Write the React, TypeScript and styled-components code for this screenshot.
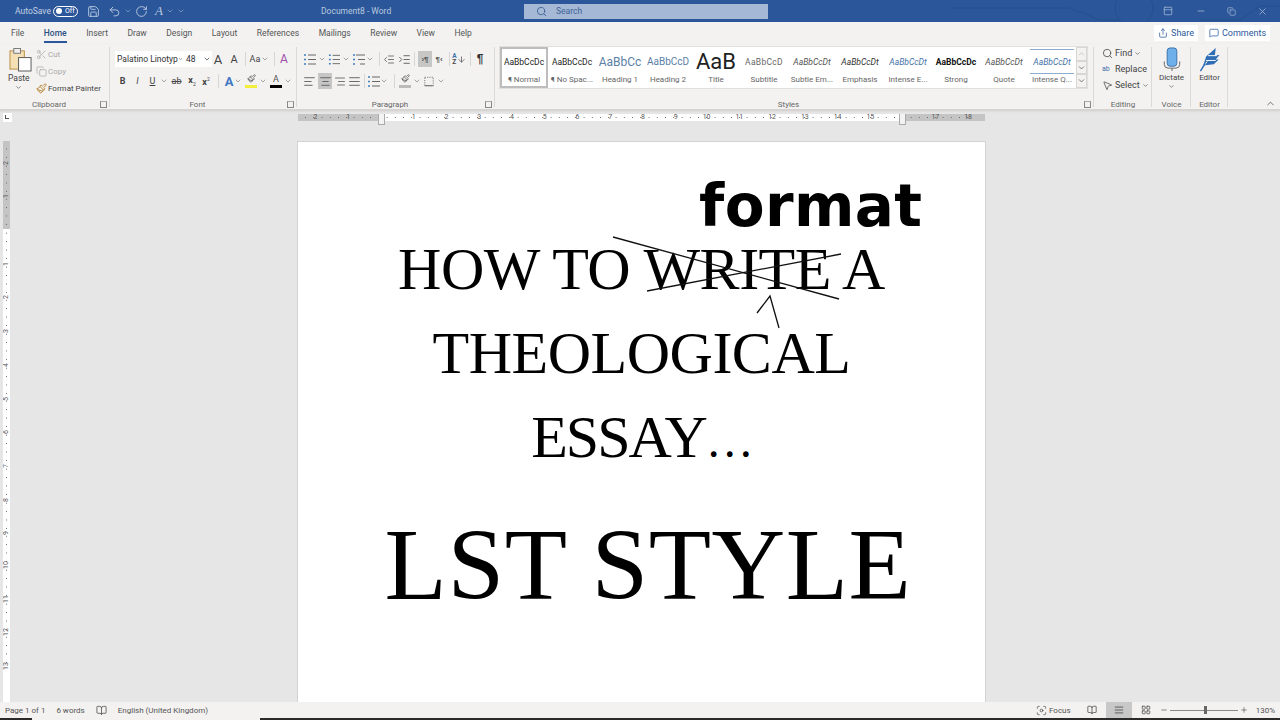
import React from "react"
import styled, { createGlobalStyle } from "styled-components"
import {
  AlignCenter,
  AlignJustify,
  AlignLeft,
  AlignRight,
  ArrowDown,
  BookOpen,
  ChevronDown,
  ChevronUp,
  Copy,
  Focus,
  Indent,
  LayoutGrid,
  Minus,
  MessageSquare,
  MousePointer2,
  Outdent,
  PanelTop,
  Paintbrush,
  Plus,
  RotateCw,
  Save,
  Scissors,
  Search,
  Share,
  Undo2,
  X,
} from "lucide-react"

const GlobalStyle = createGlobalStyle`
  html, body {
    margin: 0;
    height: 100%;
    overflow: hidden;
    font-family: Roboto, "Liberation Sans", sans-serif;
    color: #444;
  }
`

const TABS = ["File", "Home", "Insert", "Draw", "Design", "Layout", "References", "Mailings", "Review", "View", "Help"]

const STYLES = [
  { preview: "AaBbCcDc", label: "¶ Normal", size: 8.5, color: "#222", active: true },
  { preview: "AaBbCcDc", label: "¶ No Spac...", size: 8.5, color: "#222" },
  { preview: "AaBbCc", label: "Heading 1", size: 12, color: "#5b7fa6" },
  { preview: "AaBbCcD", label: "Heading 2", size: 10, color: "#5b7fa6" },
  { preview: "AaB", label: "Title", size: 22, color: "#222" },
  { preview: "AaBbCcD", label: "Subtitle", size: 8.5, color: "#666", spaced: true },
  { preview: "AaBbCcDt", label: "Subtle Em...", size: 8.5, color: "#555", italic: true },
  { preview: "AaBbCcDt", label: "Emphasis", size: 8.5, color: "#333", italic: true },
  { preview: "AaBbCcDt", label: "Intense E...", size: 8.5, color: "#4472a8", italic: true },
  { preview: "AaBbCcDc", label: "Strong", size: 8.5, color: "#111", bold: true },
  { preview: "AaBbCcDt", label: "Quote", size: 8.5, color: "#555", italic: true },
  { preview: "AaBbCcDt", label: "Intense Q...", size: 8.5, color: "#4472a8", italic: true, ruled: true },
]

const App = () => {
  return (
    <>
      <GlobalStyle />
      <Shell>
        <TitleBar>
          <Circuit viewBox="0 0 340 22" fill="none">
            <path d="M10 8H130L160 20H180M260 20H300L320 6H340" stroke="#24508f" />
            <circle cx="194" cy="8" r="19" stroke="#24508f" />
          </Circuit>
          <AutoSave>AutoSave</AutoSave>
          <Toggle>
            <ToggleDot />
            Off
          </Toggle>
          <TitleIcons>
            <Save size={13} strokeWidth={1.7} />
            <Undo2 size={13} strokeWidth={1.7} />
            <TinyChevron size={8} />
            <RotateCw size={13} strokeWidth={1.7} />
            <TitleGlyph>A</TitleGlyph>
            <TinyChevron size={8} />
            <TinyChevron size={8} />
          </TitleIcons>
          <DocTitle>Document8 - Word</DocTitle>
          <SearchBox>
            <Search size={11} strokeWidth={2} />
            Search
          </SearchBox>
          <WindowButtons>
            <PanelTop size={10} strokeWidth={1.8} />
            <Minus size={10} strokeWidth={1.8} />
            <Copy size={9} strokeWidth={1.8} />
            <X size={11} strokeWidth={1.6} />
          </WindowButtons>
        </TitleBar>

        <TabRow>
          {TABS.map((tab) => (
            <Tab key={tab} $active={tab === "Home"}>
              {tab}
            </Tab>
          ))}
          <TabActions>
            <ActionButton>
              <Share size={10} strokeWidth={1.8} />
              Share
            </ActionButton>
            <ActionButton $wide>
              <MessageSquare size={10} strokeWidth={1.8} />
              Comments
            </ActionButton>
          </TabActions>
        </TabRow>

        <Ribbon>
          <Group $width={110} label="Clipboard" launcher>
            <ClipboardBody>
              <PasteColumn>
                <PasteIcon viewBox="0 0 24 26" fill="none">
                  <rect x="1" y="4" width="15" height="19" fill="#f5dfb5" stroke="#b98d45" />
                  <rect x="5" y="1.5" width="7" height="5" fill="#eee" stroke="#777" />
                  <rect x="10" y="11" width="13" height="14" fill="#fff" stroke="#555" />
                </PasteIcon>
                <span>Paste</span>
                <ChevronDown size={7} />
              </PasteColumn>
              <ClipboardList>
                <ClipItem $muted>
                  <Scissors strokeWidth={1.6} />
                  Cut
                </ClipItem>
                <ClipItem $muted>
                  <Copy strokeWidth={1.6} />
                  Copy
                </ClipItem>
                <ClipItem>
                  <Paintbrush strokeWidth={2} color="#b5812f" />
                  Format Painter
                </ClipItem>
              </ClipboardList>
            </ClipboardBody>
          </Group>

          <Group $width={187} label="Font" launcher>
            <ToolRows>
              <ToolRow>
                <FieldBox $width={69}>
                  Palatino Linotyp
                  <ChevronDown size={8} />
                </FieldBox>
                <FieldBox $width={28}>
                  48
                  <ChevronDown size={8} />
                </FieldBox>
                <Slot $w={12}><FontGlyph $size={13}>A</FontGlyph></Slot>
                <Slot $w={20}><FontGlyph $size={11}>A</FontGlyph></Slot>
                <Slot $w={3}><RowDivider /></Slot>
                <Slot $w={16}><FontGlyph $size={9}>Aa</FontGlyph></Slot>
                <Slot $w={4}><TinyChevron size={8} /></Slot>
                <Slot $w={14}><RowDivider /></Slot>
                <Slot $w={6}><FontGlyph $size={12} $color="#a04fa8">A</FontGlyph></Slot>
              </ToolRow>
              <ToolRow>
                <Slot $w={15}><FontGlyph $size={9} $bold>B</FontGlyph></Slot>
                <Slot $w={15}><FontGlyph $size={9} $italic>I</FontGlyph></Slot>
                <Slot $w={15}><FontGlyph $size={9} $underline>U</FontGlyph></Slot>
                <Slot $w={8}><TinyChevron size={8} /></Slot>
                <Slot $w={17}><FontGlyph $size={9} $strike>ab</FontGlyph></Slot>
                <Slot $w={14}><FontGlyph $size={9} $bold>x<Script>2</Script></FontGlyph></Slot>
                <Slot $w={14}><FontGlyph $size={9} $bold>x<Script $up>2</Script></FontGlyph></Slot>
                <Slot $w={10}><RowDivider /></Slot>
                <Slot $w={12}><FontGlyph $size={13} $bold $color="#3f78c4">A</FontGlyph></Slot>
                <Slot $w={6}><TinyChevron size={8} /></Slot>
                <Slot $w={20}>
                  <ColorTool $bar="#f2ee3a">
                    <Paintbrush size={9} strokeWidth={2} />
                  </ColorTool>
                </Slot>
                <Slot $w={4}><TinyChevron size={8} /></Slot>
                <Slot $w={22}><ColorTool $bar="#000">A</ColorTool></Slot>
                <Slot $w={1}><TinyChevron size={8} /></Slot>
              </ToolRow>
            </ToolRows>
          </Group>

          <Group $width={198} label="Paragraph" launcher>
            <ToolRows>
              <ToolRow $inset={6}>
                <Slot $w={13}><ListGlyph /></Slot>
                <Slot $w={12}><TinyChevron size={8} /></Slot>
                <Slot $w={12}><ListGlyph /></Slot>
                <Slot $w={12}><TinyChevron size={8} /></Slot>
                <Slot $w={13}><ListGlyph stepped /></Slot>
                <Slot $w={10}><TinyChevron size={8} /></Slot>
                <Slot $w={8}><RowDivider /></Slot>
                <Slot $w={12}><Outdent size={13} strokeWidth={1.8} color="#666" /></Slot>
                <Slot $w={18}><Indent size={13} strokeWidth={1.8} color="#666" /></Slot>
                <Slot $w={3}><RowDivider /></Slot>
                <Slot $w={18}><ToggleTool $on><MarkText>›¶</MarkText></ToggleTool></Slot>
                <Slot $w={10}><MarkText>¶‹</MarkText></Slot>
                <Slot $w={10}><RowDivider /></Slot>
                <Slot $w={10}>
                  <SortTool>
                    <SortLetters>
                      <span>A</span>
                      <span>Z</span>
                    </SortLetters>
                    <ArrowDown size={9} strokeWidth={2} />
                  </SortTool>
                </Slot>
                <Slot $w={12}><RowDivider /></Slot>
                <Slot $w={8}><ShowMarks>¶</ShowMarks></Slot>
              </ToolRow>
              <ToolRow $inset={6}>
                <Slot $w={13}><AlignLeft size={13} strokeWidth={1.8} color="#666" /></Slot>
                <Slot $w={18}><ToggleTool $on><AlignCenter size={13} strokeWidth={1.8} color="#666" /></ToggleTool></Slot>
                <Slot $w={12}><AlignRight size={13} strokeWidth={1.8} color="#666" /></Slot>
                <Slot $w={16}><AlignJustify size={13} strokeWidth={1.8} color="#666" /></Slot>
                <Slot $w={4}><RowDivider /></Slot>
                <Slot $w={14}><ListGlyph /></Slot>
                <Slot $w={8}><TinyChevron size={8} /></Slot>
                <Slot $w={12}><RowDivider /></Slot>
                <Slot $w={10}>
                  <ColorTool $bar="#bbb">
                    <Paintbrush size={9} strokeWidth={2} />
                  </ColorTool>
                </Slot>
                <Slot $w={14}><TinyChevron size={8} /></Slot>
                <Slot $w={10}><BorderIcon /></Slot>
                <Slot $w={14}><TinyChevron size={8} /></Slot>
              </ToolRow>
            </ToolRows>
          </Group>

          <Group $width={599} label="Styles" launcher>
            <Gallery>
              {STYLES.map((s) => (
                <StyleCell key={s.label} $active={s.active}>
                  <StylePreview
                    $size={s.size}
                    $color={s.color}
                    $bold={s.bold}
                    $italic={s.italic}
                    $spaced={s.spaced}
                    $ruled={s.ruled}
                  >
                    {s.preview}
                  </StylePreview>
                  <StyleLabel>{s.label}</StyleLabel>
                </StyleCell>
              ))}
              <GalleryScroll>
                <ChevronUp size={8} color="#bbb" />
                <ChevronDown size={8} />
                <ChevronDown size={8} />
              </GalleryScroll>
            </Gallery>
          </Group>

          <Group $width={58} label="Editing">
            <EditingList>
              <EditItem>
                <Search strokeWidth={1.7} />
                Find
                <ChevronDown size={7} />
              </EditItem>
              <EditItem>
                <ReplaceGlyph>ab</ReplaceGlyph>
                Replace
              </EditItem>
              <EditItem>
                <MousePointer2 strokeWidth={1.6} />
                Select
                <ChevronDown size={7} />
              </EditItem>
            </EditingList>
          </Group>

          <Group $width={39} label="Voice">
            <BigTool>
              <svg width="18" height="25" viewBox="0 0 18 26" fill="none">
                <rect x="4" y="1" width="10" height="19" rx="3" fill="#6fb0ea" stroke="#3d6fa8" />
                <path d="M1 15v3a4 4 0 0 0 4 4h8a4 4 0 0 0 4-4v-3M9 22v3" stroke="#666" />
              </svg>
              <span>Dictate</span>
              <ChevronDown size={7} />
            </BigTool>
          </Group>

          <Group $width={37} label="Editor">
            <BigTool>
              <svg width="22" height="25" viewBox="0 0 22 26" fill="none">
                <path d="M3 22L7 10 17 1l-1 8 5-1-4 5 3 0-5 5-9 1z" fill="#2f6db5" />
                <path d="M1 25L8 15M9 9h9M7 14h10" stroke="#fff" />
                <path d="M1 25L6 17" stroke="#2f6db5" strokeWidth="1.5" />
              </svg>
              <span>Editor</span>
            </BigTool>
          </Group>

          <Collapse>
            <ChevronUp size={11} strokeWidth={2} />
          </Collapse>
        </Ribbon>

        <RulerBar>
          <TabStop />
          <HRuler>
            <RulerPart $shade $width={83}>
              <RulerCell />
              <RulerCell>2</RulerCell>
              <RulerCell>1</RulerCell>
              <RulerCell />
            </RulerPart>
            <RulerPart $width={521} $start>
              {Array.from({ length: 16 }, (_, i) => (
                <RulerCell key={i}>{i + 1 === 16 ? "" : i + 1}</RulerCell>
              ))}
            </RulerPart>
            <RulerPart $shade $width={83}>
              <RulerCell />
              <RulerCell>17</RulerCell>
              <RulerCell>18</RulerCell>
              <RulerTail />
            </RulerPart>
            <MarginMark $left={83} />
            <MarginMark $left={604} />
          </HRuler>
        </RulerBar>

        <Workspace>
          <VRuler>
            <VPart $shade $height={88}>
              <VCell />
              <VCell><VNum>2</VNum></VCell>
              <VCell><VNum>1</VNum></VCell>
              <VCell />
            </VPart>
            <VPart $height={473} $start>
              {Array.from({ length: 13 }, (_, i) => (
                <VCell key={i}><VNum>{i + 1}</VNum></VCell>
              ))}
            </VPart>
          </VRuler>

          <Page>
            <Heading>HOW TO WRITE A</Heading>
            <Heading>THEOLOGICAL</Heading>
            <Heading $tight>
              ESSAY<Dots>…</Dots>
            </Heading>
            <BigLine>LST STYLE</BigLine>

            <Markup viewBox="0 0 687 200" fill="none" stroke="#111">
              <path d="M315 95L541 157" strokeWidth="1.3" />
              <path d="M349 149L543 112" strokeWidth="1.3" />
              <path d="M459 171L472 154 481 186" strokeWidth="1.3" />
            </Markup>
            <Handwritten>format</Handwritten>
          </Page>
        </Workspace>

        <StatusBar>
          <StatusText>Page 1 of 1</StatusText>
          <StatusText>6 words</StatusText>
          <BookOpen size={11} strokeWidth={1.8} />
          <StatusText>English (United Kingdom)</StatusText>
          <StatusRight>
            <FocusItem>
              <Focus size={11} strokeWidth={1.8} />
              Focus
            </FocusItem>
            <ViewButton>
              <BookOpen size={10} strokeWidth={2} />
            </ViewButton>
            <ViewButton $on>
              <AlignJustify size={10} strokeWidth={2.2} />
            </ViewButton>
            <ViewButton>
              <LayoutGrid size={10} strokeWidth={2} />
            </ViewButton>
            <Zoom>
              <Minus size={8} strokeWidth={2} />
              <ZoomTrack>
                <ZoomThumb />
              </ZoomTrack>
              <Plus size={8} strokeWidth={2} />
            </Zoom>
            <StatusText>130%</StatusText>
          </StatusRight>
        </StatusBar>
        <BottomEdge>
          <EdgePiece $width={32} $dark />
          <EdgePiece $width={228} />
          <EdgePiece $width={1020} $dark />
        </BottomEdge>
      </Shell>
    </>
  )
}

type GroupProps = { $width: number; label: string; launcher?: boolean; children: React.ReactNode }

const Group = ({ $width, label, launcher, children }: GroupProps) => (
  <GroupBox $width={$width}>
    <GroupBody>{children}</GroupBody>
    <GroupLabel $launcher={launcher}>
      <span />
      <span>{label}</span>
      {launcher ? <Launcher /> : <span />}
    </GroupLabel>
  </GroupBox>
)

const ListGlyph = ({ stepped }: { stepped?: boolean }) => (
  <svg width="13" height="13" viewBox="0 0 13 13" fill="none">
    <path d="M1 2h2M1 6.5h2M1 11h2" stroke="#3f7fc0" strokeWidth="1.6" />
    <path
      d={stepped ? "M4 2h9M6 6.5h7M8 11h5" : "M5 2h8M5 6.5h8M5 11h8"}
      stroke="#666"
    />
  </svg>
)

const BorderIcon = () => (
  <svg width="13" height="13" viewBox="0 0 13 13" fill="none" stroke="#555">
    <path d="M1 1h11v11H1z" strokeDasharray="1.5 1.5" />
    <path d="M1 12h11" />
  </svg>
)

const Shell = styled.div`
  width: 1280px;
  height: 720px;
  display: flex;
  flex-direction: column;
  overflow: hidden;
  background: #e6e6e6;
`

const TitleBar = styled.header`
  position: relative;
  flex: 0 0 22px;
  display: flex;
  align-items: center;
  padding-left: 15px;
  background: #2b579a;
  color: #d5dfee;
  font-size: 8.5px;
`

const Circuit = styled.svg`
  position: absolute;
  right: 0;
  top: 0;
  width: 340px;
  height: 22px;
`

const AutoSave = styled.span`
  width: 38px;
  color: #c3d0e4;
`

const Toggle = styled.span`
  width: 25px;
  height: 11px;
  box-sizing: border-box;
  display: flex;
  align-items: center;
  gap: 3px;
  padding-left: 2px;
  border: 1px solid #fff;
  border-radius: 6px;
  color: #fff;
  font-size: 7px;
`

const ToggleDot = styled.i`
  width: 6px;
  height: 6px;
  border-radius: 50%;
  background: #fff;
`

const TitleIcons = styled.div`
  display: flex;
  align-items: center;
  gap: 3px;
  width: 228px;
  margin-left: 9px;
  color: #b9c8df;
  svg:first-child {
    margin-right: 5px;
  }
`

const TitleGlyph = styled.span`
  margin-left: 4px;
  font-family: "Liberation Serif", serif;
  font-style: italic;
  font-size: 13px;
`

const TinyChevron = styled(ChevronDown)`
  flex: none;
  opacity: 0.75;
`

const DocTitle = styled.span`
  width: 203px;
  margin-left: 6px;
  color: #b9c8df;
  font-size: 8.5px;
`

const SearchBox = styled.div`
  width: 244px;
  height: 15px;
  box-sizing: border-box;
  display: flex;
  align-items: center;
  gap: 9px;
  padding-left: 12px;
  background: #a5b9d6;
  color: #3f6296;
  font-size: 8.5px;
`

const WindowButtons = styled.div`
  position: relative;
  display: flex;
  align-items: center;
  gap: 21px;
  margin-left: auto;
  padding-right: 12px;
  color: #a9bcd8;
  svg:first-child {
    margin-right: 2px;
  }
`

const TabRow = styled.nav`
  flex: 0 0 22px;
  display: flex;
  align-items: center;
  gap: 19.5px;
  padding-left: 11px;
  background: #f3f2f1;
  font-size: 8.5px;
`

const Tab = styled.span<{ $active?: boolean }>`
  position: relative;
  line-height: 22px;
  color: ${(p) => (p.$active ? "#2b4f82" : "#555")};
  font-weight: ${(p) => (p.$active ? 500 : 400)};
  &::after {
    content: "";
    display: ${(p) => (p.$active ? "block" : "none")};
    position: absolute;
    left: 0;
    right: 0;
    bottom: 1px;
    height: 2px;
    background: #2b579a;
  }
`

const TabActions = styled.div`
  display: flex;
  gap: 7px;
  margin-left: auto;
  padding-right: 10px;
`

const ActionButton = styled.span<{ $wide?: boolean }>`
  width: ${(p) => (p.$wide ? 65 : 44)}px;
  height: 16px;
  box-sizing: border-box;
  display: flex;
  align-items: center;
  justify-content: center;
  gap: 3px;
  background: #fff;
  color: #2b579a;
  font-size: 9px;
`

const Ribbon = styled.section`
  flex: 0 0 66px;
  display: flex;
  position: relative;
  background: #f3f2f1;
  border-bottom: 1px solid #d6d4d2;
  box-shadow: 0 1px 2px #cfcdcb;
  box-sizing: border-box;
`

const GroupBox = styled.div<{ $width: number }>`
  width: ${(p) => p.$width}px;
  box-sizing: border-box;
  display: flex;
  flex-direction: column;
  padding: 3px 0 0;
  position: relative;
  &::after {
    content: "";
    position: absolute;
    right: 0;
    top: 3px;
    bottom: 2px;
    width: 1px;
    background: #dcdad8;
  }
`

const GroupBody = styled.div`
  flex: 1;
  min-height: 0;
`

const GroupLabel = styled.div<{ $launcher?: boolean }>`
  flex: 0 0 13px;
  margin-bottom: -2px;
  padding-right: ${(p) => (p.$launcher ? 12 : 0)}px;
  display: grid;
  grid-template-columns: 1fr auto 1fr;
  align-items: center;
  color: #666;
  font-size: 8px;
`

const Launcher = styled.i`
  justify-self: end;
  width: 5px;
  height: 5px;
  margin-right: -9px;
  border: 1px solid #888;
  border-top-color: #aaa;
`

const ClipboardBody = styled.div`
  display: flex;
  padding-left: 8px;
  height: 100%;
`

const PasteColumn = styled.div`
  width: 28px;
  display: flex;
  flex-direction: column;
  align-items: flex-start;
  gap: 1px;
  font-size: 8.5px;
  svg:last-child {
    margin: 0 0 0 7px;
  }
`

const PasteIcon = styled.svg`
  width: 23px;
  height: 25px;
  margin-left: 1px;
`

const ClipboardList = styled.div`
  display: flex;
  flex-direction: column;
  gap: 5px;
  padding-top: 1px;
`

const ClipItem = styled.span<{ $muted?: boolean }>`
  height: 12px;
  display: flex;
  align-items: center;
  gap: 1px;
  color: ${(p) => (p.$muted ? "#aaa" : "#444")};
  font-size: 8px;
  white-space: nowrap;
  svg {
    flex: none;
    width: 11px;
    height: 11px;
  }
`

const ToolRows = styled.div`
  display: flex;
  flex-direction: column;
  gap: 6px;
  padding-top: 4px;
`

const ToolRow = styled.div<{ $inset?: number }>`
  height: 16px;
  display: flex;
  align-items: center;
  padding-left: ${(p) => p.$inset ?? 5}px;
  color: #555;
`

const Slot = styled.span<{ $w: number }>`
  flex: none;
  width: ${(p) => p.$w}px;
  height: 16px;
  display: flex;
  align-items: center;
  justify-content: center;
`

const FieldBox = styled.span<{ $width: number }>`
  flex: none;
  width: ${(p) => p.$width}px;
  height: 16px;
  box-sizing: border-box;
  display: flex;
  align-items: center;
  justify-content: space-between;
  padding: 0 1px 0 2px;
  background: #fff;
  color: #333;
  font-size: 8.5px;
  white-space: nowrap;
`

const FontGlyph = styled.span<{
  $size: number
  $bold?: boolean
  $italic?: boolean
  $underline?: boolean
  $strike?: boolean
  $color?: string
}>`
  font-size: ${(p) => p.$size}px;
  font-weight: ${(p) => (p.$bold ? 700 : 400)};
  font-style: ${(p) => (p.$italic ? "italic" : "normal")};
  text-decoration: ${(p) => (p.$underline ? "underline" : p.$strike ? "line-through" : "none")};
  color: ${(p) => p.$color ?? "#444"};
  white-space: nowrap;
`

const Script = styled.sub<{ $up?: boolean }>`
  font-size: 5px;
  font-weight: 400;
  vertical-align: ${(p) => (p.$up ? "super" : "sub")};
`

const RowDivider = styled.i`
  flex: none;
  width: 1px;
  height: 14px;
  background: #d8d6d4;
`

const ColorTool = styled.span<{ $bar: string }>`
  width: 12px;
  height: 14px;
  flex: none;
  box-sizing: border-box;
  display: flex;
  justify-content: center;
  font-size: 9px;
  line-height: 11px;
  border-bottom: 3px solid ${(p) => p.$bar};
`

const ToggleTool = styled.span<{ $on?: boolean }>`
  flex: none;
  width: 14px;
  height: 16px;
  display: flex;
  align-items: center;
  justify-content: center;
  background: ${(p) => (p.$on ? "#c6c6c6" : "transparent")};
`

const MarkText = styled.span`
  font-family: "Liberation Sans", sans-serif;
  font-size: 8px;
  font-weight: 700;
  color: #555;
  white-space: nowrap;
`

const ShowMarks = styled.span`
  font-family: "Liberation Sans", sans-serif;
  font-size: 12px;
  font-weight: 700;
  color: #333;
`

const SortTool = styled.span`
  flex: none;
  display: flex;
  align-items: center;
`

const SortLetters = styled.span`
  display: flex;
  flex-direction: column;
  font-size: 6.5px;
  line-height: 6.5px;
  font-weight: 700;
  color: #3d6fa8;
  span + span {
    color: #444;
  }
`

const Gallery = styled.div`
  display: flex;
  height: 41px;
  margin: 0 0 0 5px;
  width: 587px;
  background: #fff;
  box-shadow: 0 0 0 1px #e2e0de;
`

const StyleCell = styled.div<{ $active?: boolean }>`
  width: 48px;
  box-sizing: border-box;
  flex: none;
  display: flex;
  flex-direction: column;
  align-items: center;
  border: 2px solid ${(p) => (p.$active ? "#bdbdbd" : "transparent")};
`

const StylePreview = styled.div<{
  $size: number
  $color: string
  $bold?: boolean
  $italic?: boolean
  $spaced?: boolean
  $ruled?: boolean
}>`
  width: 44px;
  height: 25px;
  flex: none;
  display: flex;
  align-items: center;
  justify-content: center;
  white-space: nowrap;
  font-size: ${(p) => p.$size}px;
  color: ${(p) => p.$color};
  font-weight: ${(p) => (p.$bold ? 700 : 400)};
  font-style: ${(p) => (p.$italic ? "italic" : "normal")};
  letter-spacing: ${(p) => (p.$spaced ? "0.3px" : "0")};
  box-shadow: ${(p) => (p.$ruled ? "inset 0 -5px 0 -4px #8eabd0, inset 0 5px 0 -4px #8eabd0" : "none")};
`

const StyleLabel = styled.div`
  color: #666;
  font-size: 8px;
  line-height: 11px;
  white-space: nowrap;
`

const GalleryScroll = styled.div`
  flex: 1;
  display: flex;
  flex-direction: column;
  background: #f3f2f1;
  color: #555;
  svg {
    flex: 1;
    width: 100%;
    box-sizing: border-box;
    border: 1px solid #d8d6d4;
  }
`

const EditingList = styled.div`
  display: flex;
  flex-direction: column;
  gap: 4px;
  padding-left: 8px;
`

const EditItem = styled.span`
  height: 12px;
  display: flex;
  align-items: center;
  gap: 2px;
  font-size: 9px;
  white-space: nowrap;
  svg:first-child {
    flex: none;
    width: 11px;
    height: 11px;
  }
`

const ReplaceGlyph = styled.span`
  flex: none;
  width: 11px;
  color: #3d6fa8;
  font-size: 7px;
`

const BigTool = styled.div`
  display: flex;
  flex-direction: column;
  align-items: center;
  gap: 1px;
  font-size: 8px;
`

const Collapse = styled.span`
  position: absolute;
  right: 4px;
  bottom: 0;
  display: flex;
  color: #666;
`

const RulerBar = styled.div`
  flex: 0 0 15px;
  display: flex;
  align-items: center;
  padding-left: 3px;
`

const TabStop = styled.i`
  width: 9px;
  height: 9px;
  box-sizing: border-box;
  padding: 2px;
  background: #fff;
  &::before {
    content: "";
    display: block;
    width: 3px;
    height: 3px;
    border-left: 1px solid #555;
    border-bottom: 1px solid #555;
  }
`

const HRuler = styled.div`
  position: relative;
  display: flex;
  height: 7px;
  margin-left: 286px;
`

const RulerPart = styled.div<{ $shade?: boolean; $width: number; $start?: boolean }>`
  width: ${(p) => p.$width}px;
  display: flex;
  justify-content: ${(p) => (p.$start ? "flex-start" : "flex-end")};
  overflow: hidden;
  background: ${(p) => (p.$shade ? "#c4c4c4" : "#fff")};
`

const RulerCell = styled.span`
  flex: 0 0 32.75px;
  display: flex;
  align-items: center;
  justify-content: flex-end;
  font-size: 7px;
  line-height: 7px;
  color: #555;
  text-align: center;
  background: radial-gradient(circle, #666 0.6px, transparent 0.8px) 0 0 / 8.2px 7px repeat-x;
  transform: translateX(2px);
`

const RulerTail = styled.span`
  flex: 0 0 15px;
`

const MarginMark = styled.i<{ $left: number }>`
  position: absolute;
  left: ${(p) => p.$left - 3}px;
  top: 0;
  width: 7px;
  height: 11px;
  box-sizing: border-box;
  border: 1px solid #aaa;
  border-top: none;
  background: #f3f3f3;
`

const Workspace = styled.main`
  flex: 1;
  min-height: 0;
  display: flex;
  overflow: hidden;
`

const VRuler = styled.div`
  flex: none;
  width: 7px;
  margin: 16px 0 0 3px;
  display: flex;
  flex-direction: column;
`

const VPart = styled.div<{ $shade?: boolean; $height: number; $start?: boolean }>`
  height: ${(p) => p.$height}px;
  flex: none;
  display: flex;
  flex-direction: column;
  justify-content: ${(p) => (p.$start ? "flex-start" : "flex-end")};
  overflow: hidden;
  background: ${(p) => (p.$shade ? "#c4c4c4" : "#fff")};
`

const VCell = styled.span`
  flex: 0 0 33.7px;
  display: flex;
  flex-direction: column;
  justify-content: flex-end;
  align-items: center;
  background: radial-gradient(circle, #666 0.6px, transparent 0.8px) 0 0 / 7px 8.4px repeat-y;
`

const VNum = styled.span`
  writing-mode: vertical-rl;
  transform: rotate(180deg) translateY(-3px);
  font-size: 7px;
  line-height: 7px;
  color: #555;
`

const Page = styled.article`
  position: relative;
  flex: none;
  width: 687px;
  height: 700px;
  box-sizing: border-box;
  margin: 17px 0 0 288px;
  padding-top: 85px;
  background: #fff;
  box-shadow: 0 0 0 1px #d3d3d3;
  color: #000;
  font-family: "Liberation Serif", "Times New Roman", serif;
  text-align: center;
`

const Heading = styled.p<{ $tight?: boolean }>`
  margin: 0;
  font-size: 60px;
  line-height: 84px;
  letter-spacing: ${(p) => (p.$tight ? -2 : -0.5)}px;
  white-space: nowrap;
`

const Dots = styled.span`
  font-size: 48px;
`

const BigLine = styled.p`
  margin: 21px 0 0;
  padding-left: 13px;
  font-size: 102px;
  line-height: 122px;
  letter-spacing: 0.5px;
  white-space: nowrap;
`

const Markup = styled.svg`
  position: absolute;
  left: 0;
  top: 0;
  width: 687px;
  height: 200px;
`

const Handwritten = styled.span`
  position: absolute;
  left: 401px;
  top: 24px;
  font-family: "DejaVu Sans", sans-serif;
  font-weight: 700;
  font-size: 58px;
  line-height: 80px;
  letter-spacing: 0.4px;
  color: #000;
`

const StatusBar = styled.footer`
  flex: 0 0 16px;
  display: flex;
  align-items: center;
  gap: 11px;
  padding-left: 5px;
  background: #f3f2f1;
  font-size: 8px;
  color: #555;
`

const StatusText = styled.span`
  white-space: nowrap;
`

const StatusRight = styled.div`
  display: flex;
  align-items: center;
  margin-left: auto;
  padding-right: 5px;
`

const FocusItem = styled.span`
  display: flex;
  align-items: center;
  gap: 2px;
  margin-right: 8px;
`

const ViewButton = styled.span<{ $on?: boolean }>`
  width: 26px;
  height: 16px;
  display: flex;
  align-items: center;
  justify-content: center;
  margin-right: 1px;
  background: ${(p) => (p.$on ? "#c8c8c8" : "transparent")};
`

const Zoom = styled.div`
  display: flex;
  align-items: center;
  gap: 2px;
  margin: 0 8px 0 0;
`

const ZoomTrack = styled.div`
  width: 68px;
  height: 1px;
  box-sizing: border-box;
  padding-left: 4px;
  display: flex;
  align-items: center;
  justify-content: center;
  background: #888;
`

const ZoomThumb = styled.i`
  flex: none;
  width: 3px;
  height: 8px;
  background: #666;
`

const BottomEdge = styled.div`
  flex: 0 0 2px;
  display: flex;
  background: #f3f2f1;
`

const EdgePiece = styled.i<{ $width: number; $dark?: boolean }>`
  width: ${(p) => p.$width}px;
  background: ${(p) => (p.$dark ? "#2a2a2a" : "#f3f2f1")};
`

export default App
